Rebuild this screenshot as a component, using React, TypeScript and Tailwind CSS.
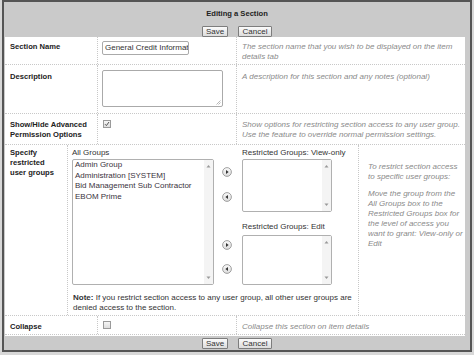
import React from "react";

const Btn = ({ label, w }: { label: string; w: string }) => (
  <div
    className={`${w} h-[11px] border border-[#7d7d7d] rounded-[1px] bg-gradient-to-b from-[#fbfbfb] to-[#dcdcdc] text-[#333] text-[8px] leading-[9px] text-center`}
  >
    {label}
  </div>
);

const Buttons = () => (
  <div className="flex justify-center gap-[10px]">
    <Btn label="Save" w="w-[26px]" />
    <Btn label="Cancel" w="w-[34px]" />
  </div>
);

const Checkbox = ({ checked }: { checked?: boolean }) => (
  <div className="w-[8px] h-[8px] border border-[#9a9a9a] bg-gradient-to-b from-[#f6f6f6] to-[#dedede] flex items-center justify-center">
    {checked && (
      <svg width="6" height="6" viewBox="0 0 6 6">
        <path d="M1 3.2 L2.4 4.6 L5 1" stroke="#555" strokeWidth="1" fill="none" />
      </svg>
    )}
  </div>
);

const Arrow = ({ dir }: { dir: "r" | "l" }) => (
  <svg width="10" height="10" viewBox="0 0 10 10">
    <defs>
      <linearGradient id={`g${dir}`} x1="0" y1="0" x2="0" y2="1">
        <stop offset="0" stopColor="#fafafa" />
        <stop offset="1" stopColor="#dcdcdc" />
      </linearGradient>
    </defs>
    <circle cx="5" cy="5" r="4.4" fill={`url(#g${dir})`} stroke="#8c8c8c" strokeWidth="0.8" />
    {dir === "r" ? (
      <path d="M4 3 L6.6 5 L4 7 Z" fill="#333" />
    ) : (
      <path d="M6 3 L3.4 5 L6 7 Z" fill="#333" />
    )}
  </svg>
);

const ListBox = ({ w, h, items }: { w: string; h: string; items?: string[] }) => (
  <div className={`${w} ${h} border border-[#b0b0b0] rounded-[2px] bg-white flex`}>
    <div className="flex-1 pl-[2px] text-[#3a3340] text-[8px] leading-[10.5px] overflow-hidden">
      {items?.map((t) => (
        <div key={t} className="whitespace-nowrap">
          {t}
        </div>
      ))}
    </div>
    <div className="w-[9px] bg-[#f4f4f4] flex flex-col items-center justify-between py-[4px]">
      <svg width="5" height="4" viewBox="0 0 5 4">
        <path d="M0.5 3.5 L2.5 1 L4.5 3.5 Z" fill="#999" />
      </svg>
      <svg width="5" height="4" viewBox="0 0 5 4">
        <path d="M0.5 0.5 L2.5 3 L4.5 0.5 Z" fill="#999" />
      </svg>
    </div>
  </div>
);

export default function App() {
  const label = "text-[#222] font-bold text-[7.6px] leading-[9.5px]";
  const help = "text-[#8a8a8a] italic text-[8px] leading-[10px]";
  const dot = "border-[#c8c8c8] border-dotted";
  return (
    <div className="w-[474px] h-[355px] bg-[#d8d8d8] pl-[2px] overflow-hidden font-['Liberation_Sans',Arial,sans-serif]">
      <div className="w-[470px] h-[352px] border-2 border-[#555] bg-[#cacaca] flex flex-col">
        {/* header */}
        <div className="h-[35px] flex flex-col pt-[7px]">
          <div className="text-center text-[#222] font-bold text-[7.6px] leading-[10px]">Editing a Section</div>
          <div className="mt-[7px]">
            <Buttons />
          </div>
        </div>
        {/* body */}
        <div className="h-[299px] pl-[1px] pr-[5px]">
          <div className="h-full bg-white flex flex-col">
            {/* Section Name */}
            <div className={`h-[28px] flex border-b ${dot}`}>
              <div className={`w-[92px] pl-[5px] pt-[5px] ${label}`}>Section Name</div>
              <div className={`w-[139px] border-l ${dot} pl-[4px] pt-[4px]`}>
                <div className="w-[87px] h-[14px] border border-[#aaa] rounded-[2px] pl-[2px] overflow-hidden whitespace-nowrap text-[#333] text-[8px] leading-[12px]">
                  General Credit Information
                </div>
              </div>
              <div className={`flex-1 border-l ${dot} pl-[5px] pr-[4px] pt-[5px] ${help}`}>
                The section name that you wish to be displayed on the item details tab
              </div>
            </div>
            {/* Description */}
            <div className={`h-[49px] flex border-b ${dot}`}>
              <div className={`w-[92px] pl-[5px] pt-[7px] ${label}`}>Description</div>
              <div className={`w-[139px] border-l ${dot} pl-[4px] pt-[5px]`}>
                <div className="relative w-[121px] h-[37px] border border-[#aaa] rounded-[2px]">
                  <svg className="absolute right-[1px] bottom-[1px]" width="5" height="5" viewBox="0 0 5 5">
                    <path d="M4.5 0.5 L0.5 4.5 M4.5 2.5 L2.5 4.5" stroke="#999" strokeWidth="0.7" />
                  </svg>
                </div>
              </div>
              <div className={`flex-1 border-l ${dot} pl-[5px] pt-[7px] ${help}`}>
                A description for this section and any notes (optional)
              </div>
            </div>
            {/* Show/Hide */}
            <div className={`h-[31px] flex border-b ${dot}`}>
              <div className={`w-[92px] pl-[5px] pt-[6px] ${label}`}>
                Show/Hide Advanced
                <br />
                Permission Options
              </div>
              <div className={`w-[139px] border-l ${dot} pl-[5px] pt-[6px]`}>
                <Checkbox checked />
              </div>
              <div className={`flex-1 border-l ${dot} pl-[5px] pt-[6px] whitespace-nowrap ${help} leading-[9.5px]`}>
                Show options for restricting section access to any user group.
                <br />
                Use the feature to override normal permission settings.
              </div>
            </div>
            {/* Specify restricted user groups */}
            <div className={`h-[171px] flex border-b ${dot}`}>
              <div className={`w-[62px] pl-[5px] pt-[3px] ${label} leading-[10px]`}>
                Specify
                <br />
                restricted
                <br />
                user groups
              </div>
              <div className={`w-[291px] border-l ${dot} pl-[4px] pt-[3px] flex flex-col`}>
                <div className="flex">
                  <div className="flex flex-col w-[142px]">
                    <div className="text-[#333] text-[8px] leading-[10px]">All Groups</div>
                    <div className="mt-[1px]">
                      <ListBox
                        w="w-[142px]"
                        h="h-[126px]"
                        items={["Admin Group", "Administration [SYSTEM]", "Bid Management Sub Contractor", "EBOM Prime"]}
                      />
                    </div>
                  </div>
                  <div className="w-[28px] pl-[8px] flex flex-col">
                    <div className="mt-[19px]">
                      <Arrow dir="r" />
                    </div>
                    <div className="mt-[15px]">
                      <Arrow dir="l" />
                    </div>
                    <div className="mt-[38px]">
                      <Arrow dir="r" />
                    </div>
                    <div className="mt-[14px]">
                      <Arrow dir="l" />
                    </div>
                  </div>
                  <div className="flex flex-col w-[90px]">
                    <div className="text-[#333] text-[8px] leading-[10px] whitespace-nowrap">Restricted Groups: View-only</div>
                    <div className="mt-[1px]">
                      <ListBox w="w-[90px]" h="h-[53px]" />
                    </div>
                    <div className="mt-[10px] text-[#333] text-[8px] leading-[10px] whitespace-nowrap">
                      Restricted Groups: Edit
                    </div>
                    <div className="mt-[3px]">
                      <ListBox w="w-[90px]" h="h-[50px]" />
                    </div>
                  </div>
                </div>
                <div className="mt-[8px] text-[#333] text-[8px] leading-[10px] pl-[1px]">
                  <b>Note:</b> If you restrict section access to any user group, all other user groups are denied access to the
                  section.
                </div>
              </div>
              <div className={`flex-1 border-l ${dot} pl-[9px] pr-[1px] pt-[17px] ${help} leading-[10.4px]`}>
                <div>To restrict section access to specific user groups:</div>
                <div className="mt-[7px]">
                  Move the group from the All Groups box to the Restricted Groups box for the level of access you want to
                  grant: View-only or Edit
                </div>
              </div>
            </div>
            {/* Collapse */}
            <div className={`h-[19px] flex border-b ${dot}`}>
              <div className={`w-[92px] pl-[5px] pt-[6px] ${label}`}>Collapse</div>
              <div className={`w-[139px] border-l ${dot} pl-[5px] pt-[5px]`}>
                <Checkbox />
              </div>
              <div className={`flex-1 border-l ${dot} pl-[5px] pt-[6px] ${help}`}>Collapse this section on item details</div>
            </div>
          </div>
        </div>
        {/* footer */}
        <div className="h-[14px] pt-[2px]">
          <Buttons />
        </div>
      </div>
    </div>
  );
}
